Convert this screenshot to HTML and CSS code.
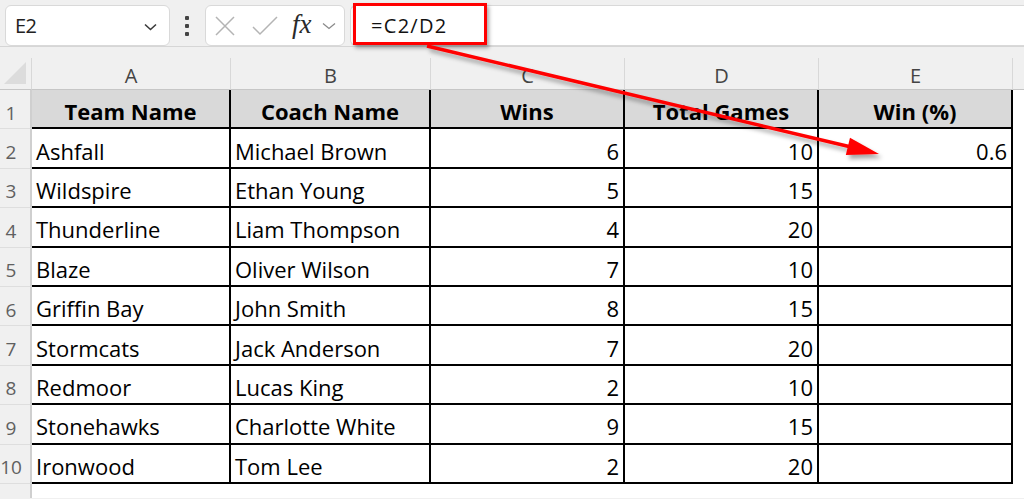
FILE: index.html
```html
<!DOCTYPE html>
<html>
<head>
<meta charset="utf-8">
<link rel="stylesheet" href="styles.css">
</head>
<body>
<div class="topbar">
  <div class="namebox">
    <span class="ref">E2</span>
    <svg class="nb-chev" width="13" height="8" viewBox="0 0 13 8"><path d="M1 1.5 L6.5 6.5 L12 1.5" fill="none" stroke="#3a3a3a" stroke-width="1.6"/></svg>
  </div>
  <div class="dots"><i></i><i></i><i></i></div>
  <div class="fxbox">
    <svg class="ico-x" width="20" height="20" viewBox="0 0 20 20"><path d="M1 1 L19 19 M19 1 L1 19" stroke="#b4b4b4" stroke-width="1.5" fill="none"/></svg>
    <svg class="ico-check" width="26" height="20" viewBox="0 0 26 20"><path d="M1 11 L8 18 L25 1" stroke="#b4b4b4" stroke-width="1.5" fill="none"/></svg>
    <span class="fx">fx</span>
    <svg class="fx-chev" width="14" height="8" viewBox="0 0 14 8"><path d="M1 1.5 L7 6.5 L13 1.5" fill="none" stroke="#8a8a8a" stroke-width="1.3"/></svg>
  </div>
  <div class="formula"><span class="ftext">=C2/D2</span></div>
</div>

<div class="sheet">
  <div class="corner"><svg width="22" height="22" viewBox="0 0 22 22"><path d="M22 0 L22 22 L0 22 Z" fill="#dcdcdc"/></svg></div>
  <div class="colh">A</div><div class="colh">B</div><div class="colh">C</div><div class="colh">D</div><div class="colh">E</div><div class="colh last"></div>

  <div class="rowh">1</div>
  <div class="c hd">Team Name</div><div class="c hd">Coach Name</div><div class="c hd">Wins</div><div class="c hd">Total Games</div><div class="c hd">Win (%)</div><div class="pad"></div>

  <div class="rowh">2</div>
  <div class="c">Ashfall</div><div class="c">Michael Brown</div><div class="c n">6</div><div class="c n">10</div><div class="c n">0.6</div><div class="pad"></div>

  <div class="rowh">3</div>
  <div class="c">Wildspire</div><div class="c">Ethan Young</div><div class="c n">5</div><div class="c n">15</div><div class="c n"></div><div class="pad"></div>

  <div class="rowh">4</div>
  <div class="c">Thunderline</div><div class="c">Liam Thompson</div><div class="c n">4</div><div class="c n">20</div><div class="c n"></div><div class="pad"></div>

  <div class="rowh">5</div>
  <div class="c">Blaze</div><div class="c">Oliver Wilson</div><div class="c n">7</div><div class="c n">10</div><div class="c n"></div><div class="pad"></div>

  <div class="rowh">6</div>
  <div class="c">Griffin Bay</div><div class="c">John Smith</div><div class="c n">8</div><div class="c n">15</div><div class="c n"></div><div class="pad"></div>

  <div class="rowh">7</div>
  <div class="c">Stormcats</div><div class="c">Jack Anderson</div><div class="c n">7</div><div class="c n">20</div><div class="c n"></div><div class="pad"></div>

  <div class="rowh">8</div>
  <div class="c">Redmoor</div><div class="c">Lucas King</div><div class="c n">2</div><div class="c n">10</div><div class="c n"></div><div class="pad"></div>

  <div class="rowh">9</div>
  <div class="c">Stonehawks</div><div class="c">Charlotte White</div><div class="c n">9</div><div class="c n">15</div><div class="c n"></div><div class="pad"></div>

  <div class="rowh">10</div>
  <div class="c">Ironwood</div><div class="c">Tom Lee</div><div class="c n">2</div><div class="c n">20</div><div class="c n"></div><div class="pad"></div>

  <div class="rowh end"></div>
  <div class="tail"></div>
</div>

<div class="callout"></div>

<svg class="arrow" width="1024" height="499" viewBox="0 0 1024 499">
  <defs>
    <filter id="sh" x="-10%" y="-10%" width="130%" height="140%">
      <feDropShadow dx="3" dy="4" stdDeviation="2" flood-color="#000" flood-opacity="0.35"/>
    </filter>
  </defs>
  <g filter="url(#sh)">
    <line x1="427" y1="46" x2="850" y2="146.8" stroke="#ff0000" stroke-width="3.5"/>
    <polygon points="879,154 845.8,155.1 850,137.7" fill="#ff0000"/>
  </g>
</svg>
</body>
</html>
```

FILE: styles.css
```css
* { box-sizing: border-box; }
html, body { margin: 0; padding: 0; }
body {
  width: 1024px;
  height: 499px;
  overflow: hidden;
  background: #f0f0f0;
  font-family: "Open Sans", "Noto Sans", sans-serif;
  position: relative;
}

.topbar {
  height: 47px;
  display: flex;
  align-items: flex-start;
  padding: 5px 0 0 5px;
  border-bottom: 1px solid #d6d6d6;
}
.namebox {
  width: 165px;
  height: 41px;
  background: #fff;
  border: 1px solid #d9d9d9;
  border-radius: 6px;
  display: flex;
  align-items: center;
  padding-left: 9px;
}
.ref { font-size: 20px; color: #222; letter-spacing: -0.5px; }
.nb-chev { margin-left: auto; margin-right: 12px; margin-top: 2px; }

.dots {
  width: 4px;
  margin-left: 15px;
  height: 41px;
  display: flex;
  flex-direction: column;
  justify-content: center;
  gap: 4px;
}
.dots i { display: block; width: 4px; height: 4px; background: #444; border-radius: 1px; }

.fxbox {
  width: 140px;
  height: 41px;
  margin-left: 16px;
  background: #fff;
  border: 1px solid #d9d9d9;
  border-radius: 6px;
  display: flex;
  align-items: center;
}
.ico-x { margin-left: 9px; }
.ico-check { margin-left: 17px; }
.fx {
  margin-left: 14px;
  font-family: "Liberation Serif", serif;
  font-style: italic;
  font-size: 27px;
  color: #2a2a2a;
  line-height: 1;
  margin-top: -3px;
}
.fx-chev { margin-left: 10px; }

.formula {
  flex: 1;
  height: 41px;
  margin-left: 5px;
  background: #fff;
  border: 1px solid #d9d9d9;
  border-right: none;
  border-radius: 6px 0 0 6px;
  display: flex;
  align-items: center;
  padding-left: 20px;
}
.ftext { font-size: 20px; letter-spacing: 1.3px; color: #111; }

.callout {
  position: absolute;
  left: 353px;
  top: 3px;
  width: 134px;
  height: 42px;
  border: 3px solid #ff0000;
  box-shadow: 2px 3px 4px rgba(0,0,0,0.35);
}

.sheet {
  margin-top: 11px;
  display: grid;
  grid-template-columns: 32px 199px 200px 194px 194px 194px 1fr;
  grid-template-rows: 32px repeat(10, 39.4px) 1fr;
  height: 440px;
}
.corner {
  border-right: 1px solid #d8d8d8;
  border-bottom: 1px solid #c6c6c6;
  display: flex;
  align-items: flex-end;
  justify-content: flex-end;
  padding: 0 5px 5px 0;
}
.colh {
  border-right: 1px solid #d8d8d8;
  border-bottom: 1px solid #c6c6c6;
  display: flex;
  align-items: center;
  justify-content: center;
  padding-top: 3px;
  font-size: 20px;
  color: #444;
}
.colh.last { border-right: none; }
.rowh {
  border-right: 2px solid #cfcfcf;
  border-bottom: 1px solid #dedede;
  display: flex;
  align-items: center;
  justify-content: center;
  padding-right: 8px;
  padding-top: 7px;
  font-size: 19px;
  color: #606060;
}
.rowh.end { border-bottom: none; }
.c {
  background: #fff;
  border-right: 2px solid #000;
  border-bottom: 2px solid #000;
  display: flex;
  align-items: center;
  padding: 5px 4px 0 4px;
  font-size: 22px;
  color: #000;
  white-space: nowrap;
}
.c.n { justify-content: flex-end; }
.c.hd {
  background: #d9d9d9;
  font-weight: 700;
  justify-content: center;
  padding-top: 4px;
}
.pad { background: #fff; }
.tail { grid-column: 2 / 8; background: #fff; }

.arrow {
  position: absolute;
  left: 0;
  top: 0;
  pointer-events: none;
}
```
